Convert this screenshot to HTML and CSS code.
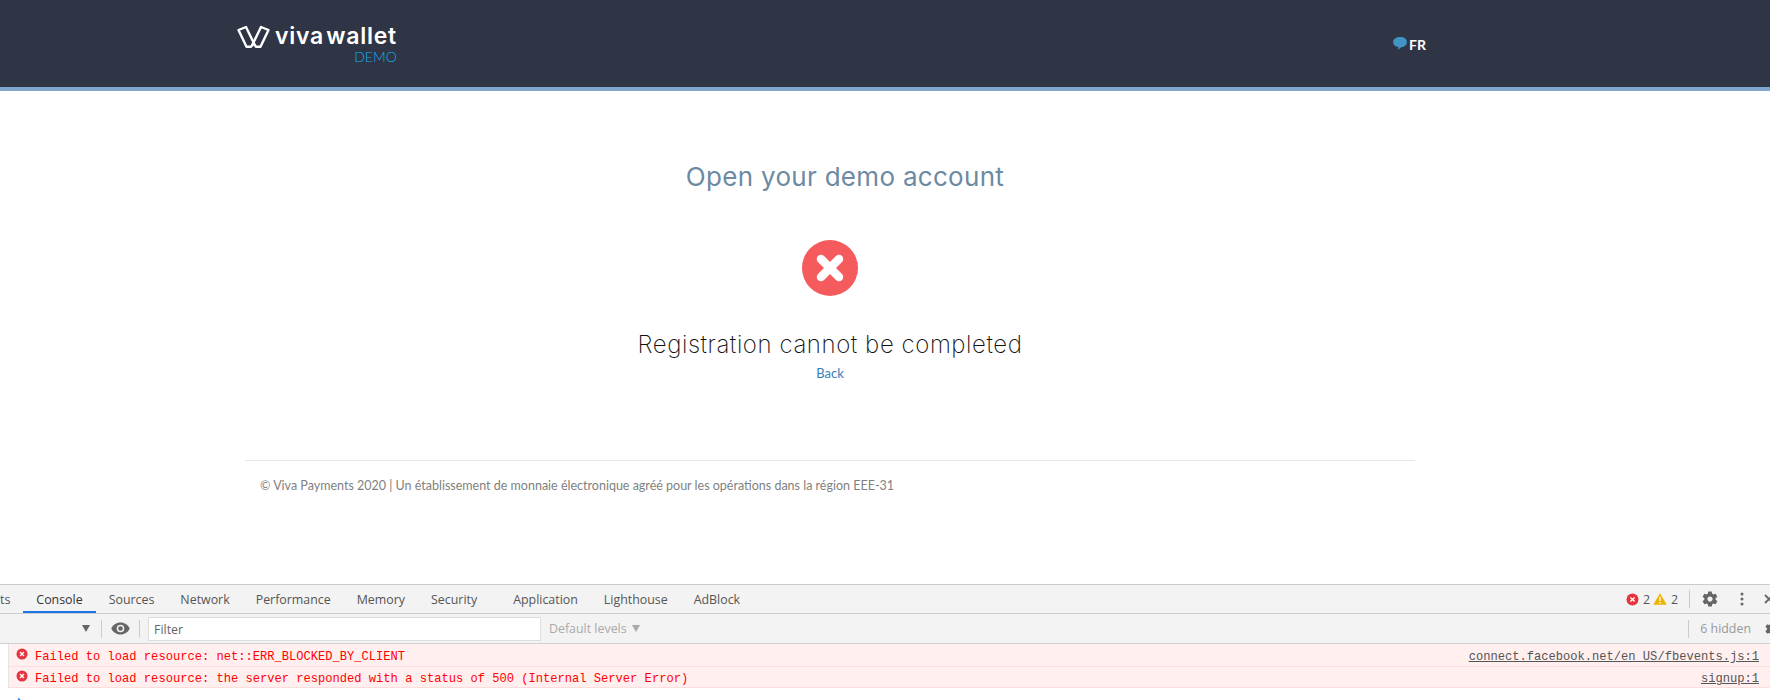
FILE: index.html
```html
<!DOCTYPE html>
<html lang="en">
<head>
<meta charset="utf-8">
<title>Open your demo account</title>
<link rel="stylesheet" href="styles.css">
</head>
<body>
<div class="page">
  <header class="topbar">
    <div class="brand">
      <svg class="brand-mark" width="33" height="24" viewBox="0 0 33 24" fill="none" stroke="#fff" stroke-width="2.4" stroke-linejoin="round" stroke-linecap="round">
        <path d="M17.500 19.500 L9 2 L1.500 5 L9.500 21.800 H14 L16.500 18.500"/>
        <path d="M15.500 19.500 L24 2 L31.500 5 L23.500 21.800 H19 L16.500 18.500"/>
      </svg>
      <div class="brand-text">
        <span class="brand-name">viva wallet</span>
        <span class="brand-demo">DEMO</span>
      </div>
    </div>
    <div class="lang">
      <svg width="16" height="16" viewBox="0 0 15 15"><path fill="#4294c4" d="M7.500 1C11.300 1 14 2.900 14 5.600S11.600 10.400 8.600 10.500L5.600 13L6 10.400C3 10 1 8.100 1 5.600S3.700 1 7.500 1Z"/></svg>
      <span>FR</span>
    </div>
  </header>

  <main class="content">
    <h1 class="title">Open your demo account</h1>
    <div class="status">
      <svg class="status-icon" width="56" height="56" viewBox="0 0 56 56">
        <circle cx="28" cy="28" r="28" fill="#f55a5c"/>
        <path d="M19 19 L37 37 M37 19 L19 37" stroke="#fff" stroke-width="8.500" stroke-linecap="round"/>
      </svg>
      <h2 class="status-title">Registration cannot be completed</h2>
      <a class="back" href="#">Back</a>
    </div>
    <footer class="legal">© Viva Payments 2020 | Un établissement de monnaie électronique agréé pour les opérations dans la région EEE-31</footer>
  </main>

  <section class="devtools">
    <nav class="tabs">
      <div class="tab-list">
        <span class="tab">Elements</span>
        <span class="tab tab-active">Console</span>
        <span class="tab">Sources</span>
        <span class="tab">Network</span>
        <span class="tab">Performance</span>
        <span class="tab">Memory</span>
        <span class="tab tab-spaced">Security</span>
        <span class="tab">Application</span>
        <span class="tab">Lighthouse</span>
        <span class="tab">AdBlock</span>
      </div>
      <div class="tab-tools">
        <svg width="13" height="13" viewBox="0 0 13 13"><circle cx="6.500" cy="6.500" r="6" fill="#e5343f"/><path d="M4.400 4.400 L8.600 8.600 M8.600 4.400 L4.400 8.600" stroke="#fff" stroke-width="1.400"/></svg>
        <span class="count count-err">2</span>
        <svg class="warn" width="14" height="12" viewBox="0 0 14 12"><path d="M7 0.300 L13.800 11.800 H0.200 Z" fill="#f0b400"/><path d="M7 3.800 V8 M7 9 V10.600" stroke="#fff" stroke-width="1.400"/></svg>
        <span class="count">2</span>
        <i class="sep"></i>
        <svg class="gear" width="18" height="18" viewBox="0 0 24 24"><path fill="#666" d="M19.400 13c.1-.3.100-.7.100-1s0-.7-.1-1l2.100-1.600c.2-.2.200-.4.100-.6l-2-3.500c-.1-.2-.4-.3-.6-.2l-2.500 1c-.5-.4-1.100-.7-1.700-1l-.4-2.600C14.400 2.200 14.200 2 14 2h-4c-.2 0-.5.2-.5.4l-.4 2.700c-.6.2-1.200.6-1.700 1l-2.500-1c-.2-.1-.5 0-.6.200l-2 3.500c-.1.2-.1.4.1.6L4.500 11c0 .3-.1.700-.1 1s0 .7.100 1l-2.100 1.600c-.2.2-.2.4-.1.6l2 3.500c.1.2.4.3.6.2l2.500-1c.5.4 1.100.7 1.700 1l.4 2.700c0 .2.3.4.5.4h4c.2 0 .5-.2.5-.4l.4-2.700c.6-.2 1.200-.6 1.700-1l2.500 1c.2.1.5 0 .6-.2l2-3.500c.1-.2.1-.4-.1-.6zM12 15.500c-1.900 0-3.500-1.600-3.500-3.500s1.600-3.500 3.500-3.500 3.500 1.600 3.500 3.500-1.600 3.500-3.500 3.500z"/></svg>
        <svg class="dots" width="4" height="14" viewBox="0 0 4 14"><circle cx="2" cy="2" r="1.500" fill="#666"/><circle cx="2" cy="7" r="1.500" fill="#666"/><circle cx="2" cy="12" r="1.500" fill="#666"/></svg>
        <svg class="close" width="10" height="10" viewBox="0 0 10 10"><path d="M1 1 L9 9 M9 1 L1 9" stroke="#666" stroke-width="1.800"/></svg>
      </div>
    </nav>
    <div class="toolbar">
      <span class="caret caret-dark"></span>
      <i class="sep sep-a"></i>
      <svg class="eye" width="19" height="13" viewBox="0 0 19 13"><path fill="#666" d="M9.500 0.500C5.300 0.500 1.800 3 0.300 6.500c1.500 3.500 5 6 9.200 6s7.700-2.500 9.200-6C17.200 3 13.700 0.500 9.500 0.500z"/><circle cx="9.500" cy="6.500" r="3.800" fill="#f3f3f3"/><circle cx="9.500" cy="6.500" r="2.300" fill="#666"/></svg>
      <i class="sep sep-b"></i>
      <div class="filter">Filter</div>
      <span class="levels">Default levels</span>
      <span class="caret caret-light"></span>
      <span class="spacer"></span>
      <i class="sep sep-c"></i>
      <span class="hidden-count">6 hidden</span>
      <svg class="gear gear-small" width="16" height="16" viewBox="0 0 24 24"><path fill="#666" d="M19.400 13c.1-.3.100-.7.100-1s0-.7-.1-1l2.100-1.600c.2-.2.200-.4.100-.6l-2-3.500c-.1-.2-.4-.3-.6-.2l-2.500 1c-.5-.4-1.100-.7-1.700-1l-.4-2.600C14.400 2.200 14.200 2 14 2h-4c-.2 0-.5.2-.5.4l-.4 2.700c-.6.2-1.200.6-1.700 1l-2.500-1c-.2-.1-.5 0-.6.200l-2 3.500c-.1.2-.1.4.1.6L4.500 11c0 .3-.1.700-.1 1s0 .7.100 1l-2.100 1.600c-.2.2-.2.4-.1.6l2 3.500c.1.2.4.3.6.2l2.500-1c.5.4 1.100.7 1.700 1l.4 2.700c0 .2.3.4.5.4h4c.2 0 .5-.2.5-.4l.4-2.700c.6-.2 1.200-.6 1.700-1l2.500 1c.2.1.5 0 .6-.2l2-3.500c.1-.2.1-.4-.1-.6z"/></svg>
    </div>
    <div class="console">
      <div class="msg msg-first">
        <svg width="12" height="12" viewBox="0 0 12 12"><circle cx="6" cy="6" r="5.500" fill="#e5343f"/><path d="M4 4 L8 8 M8 4 L4 8" stroke="#fff" stroke-width="1.400"/></svg>
        <span class="msg-text">Failed to load resource: net::ERR_BLOCKED_BY_CLIENT</span>
        <a class="src" href="#">connect.facebook.net/en_US/fbevents.js:1</a>
      </div>
      <div class="msg">
        <svg width="12" height="12" viewBox="0 0 12 12"><circle cx="6" cy="6" r="5.500" fill="#e5343f"/><path d="M4 4 L8 8 M8 4 L4 8" stroke="#fff" stroke-width="1.400"/></svg>
        <span class="msg-text">Failed to load resource: the server responded with a status of 500 (Internal Server Error)</span>
        <a class="src" href="#">signup:1</a>
      </div>
      <div class="prompt"><svg width="6" height="8" viewBox="0 0 6 8"><path d="M1 0.500 L5 4 L1 7.500" fill="none" stroke="#2b6fd8" stroke-width="1.500"/></svg></div>
    </div>
  </section>
</div>
</body>
</html>
```
FILE: styles.css
```css
* { box-sizing: border-box; }
html, body { margin: 0; height: 100%; background: #fff; }
body { overflow: hidden; font-family: Lato, "Noto Sans", sans-serif; }
.page { height: 700px; display: flex; flex-direction: column; overflow: hidden; }

.topbar {
  height: 91px; flex: none; background: #2f3545; border-bottom: 4px solid #7ea6cf;
  display: flex; justify-content: space-between; padding: 25px 344px 0 237px;
}
.brand { display: flex; gap: 5px; align-items: flex-start; }
.brand-mark { display: block; }
.brand-text { display: flex; flex-direction: column; align-items: flex-end; }
.brand-name { color: #fff; font-family: Inter, sans-serif; font-size: 23px; font-weight: 600; line-height: 23px; letter-spacing: 0.7px; word-spacing: -4px; }
.brand-demo { color: #12aef0; font-size: 14px; font-weight: 300; line-height: 14px; margin-top: 2px; }
.lang { display: flex; align-items: center; gap: 1px; height: 16px; margin-top: 11px; color: #fff; font-size: 14px; font-weight: 700; }

.content { height: 493px; flex: none; display: flex; flex-direction: column; align-items: center; padding-right: 110px; }
.title { margin: 66px 0 0 30px; font-family: Inter, sans-serif; font-size: 26px; font-weight: 400; line-height: 40px; color: #6d8aa3; letter-spacing: 0.3px; }
.status { display: flex; flex-direction: column; align-items: center; margin-top: 43px; }
.status-icon { display: block; }
.status-title { margin: 31px 0 0; font-family: Inter, sans-serif; font-size: 24px; font-weight: 200; line-height: 36px; color: #111; letter-spacing: 0.57px; }
.back { color: #3a7cb8; font-size: 13px; line-height: 18px; margin-top: 1px; text-decoration: none; }
.legal {
  width: 1170px; margin-top: 78px; border-top: 1px solid #e8e8e8; padding: 16px 15px 0;
  color: #7f7f7f; font-size: 12.500px; line-height: 18px;
}

.devtools { flex: 1; background: #fff; font-family: "Open Sans", "Noto Sans", sans-serif; font-size: 12.400px; color: #555; border-top: 1px solid #ccc; display: flex; flex-direction: column; }
.tabs { height: 29px; flex: none; background: #f3f3f3; border-bottom: 1px solid #ccc; display: flex; justify-content: space-between; }
.tab-list { display: flex; margin-left: -56px; }
.tab { height: 28px; padding: 0 13px; line-height: 30px; white-space: nowrap; }
.tab-active { color: #333; box-shadow: inset 0 -2px 0 #1a73e8; }
.tab-spaced { margin-right: 10px; }
.tab-tools { display: flex; align-items: center; width: 144px; flex: none; overflow: hidden; }
.tab-tools svg { display: block; flex: none; }
.tab-tools .count { margin: 0 5px 0 4px; color: #555; }
.tab-tools .count-err { margin-right: 3px; }
.sep { display: block; flex: none; width: 1px; height: 18px; background: #ccc; }
.tab-tools .sep { margin: 0 11px 0 6px; }
.tab-tools .dots { margin-left: 21px; }
.tab-tools .close { margin-left: 20px; }

.toolbar { height: 30px; flex: none; background: #f3f3f3; border-bottom: 1px solid #d0d0d0; display: flex; align-items: center; padding-left: 82px; }
.caret { width: 0; height: 0; border-left: 4px solid transparent; border-right: 4px solid transparent; }
.caret-dark { border-top: 7px solid #666; }
.caret-light { border-top: 7px solid #aaa; margin-left: 5px; }
.sep-a { margin-left: 11px; }
.eye { margin-left: 9px; }
.sep-b { margin-left: 9px; }
.filter { width: 393px; height: 24px; margin-left: 8px; background: #fff; border: 1px solid #ddd; padding-left: 5px; line-height: 24px; color: #666; }
.levels { margin-left: 8px; color: #aaa; }
.spacer { flex: 1; }
.hidden-count { margin-left: 11px; color: #999; white-space: nowrap; }
.gear-small { flex: none; margin: 0 -10px 0 13px; }

.console { flex: 1; padding-left: 8px; background: #fff; font-family: "Liberation Mono", monospace; font-size: 12.100px; }
.msg { height: 21px; background: #ffefef; border-bottom: 1px solid #fdd; display: flex; align-items: center; padding: 4px 11px 0 7px; color: #f00; border-left: 1px solid #e5e5e5; }
.msg-first { height: 23px; }
.msg svg { display: block; flex: none; margin-top: -6px; }
.msg-text { margin-left: 7px; flex: 1; white-space: nowrap; }
.src { color: #555; text-decoration: underline; white-space: nowrap; }
.prompt { padding: 8px 0 0 9px; }
```
